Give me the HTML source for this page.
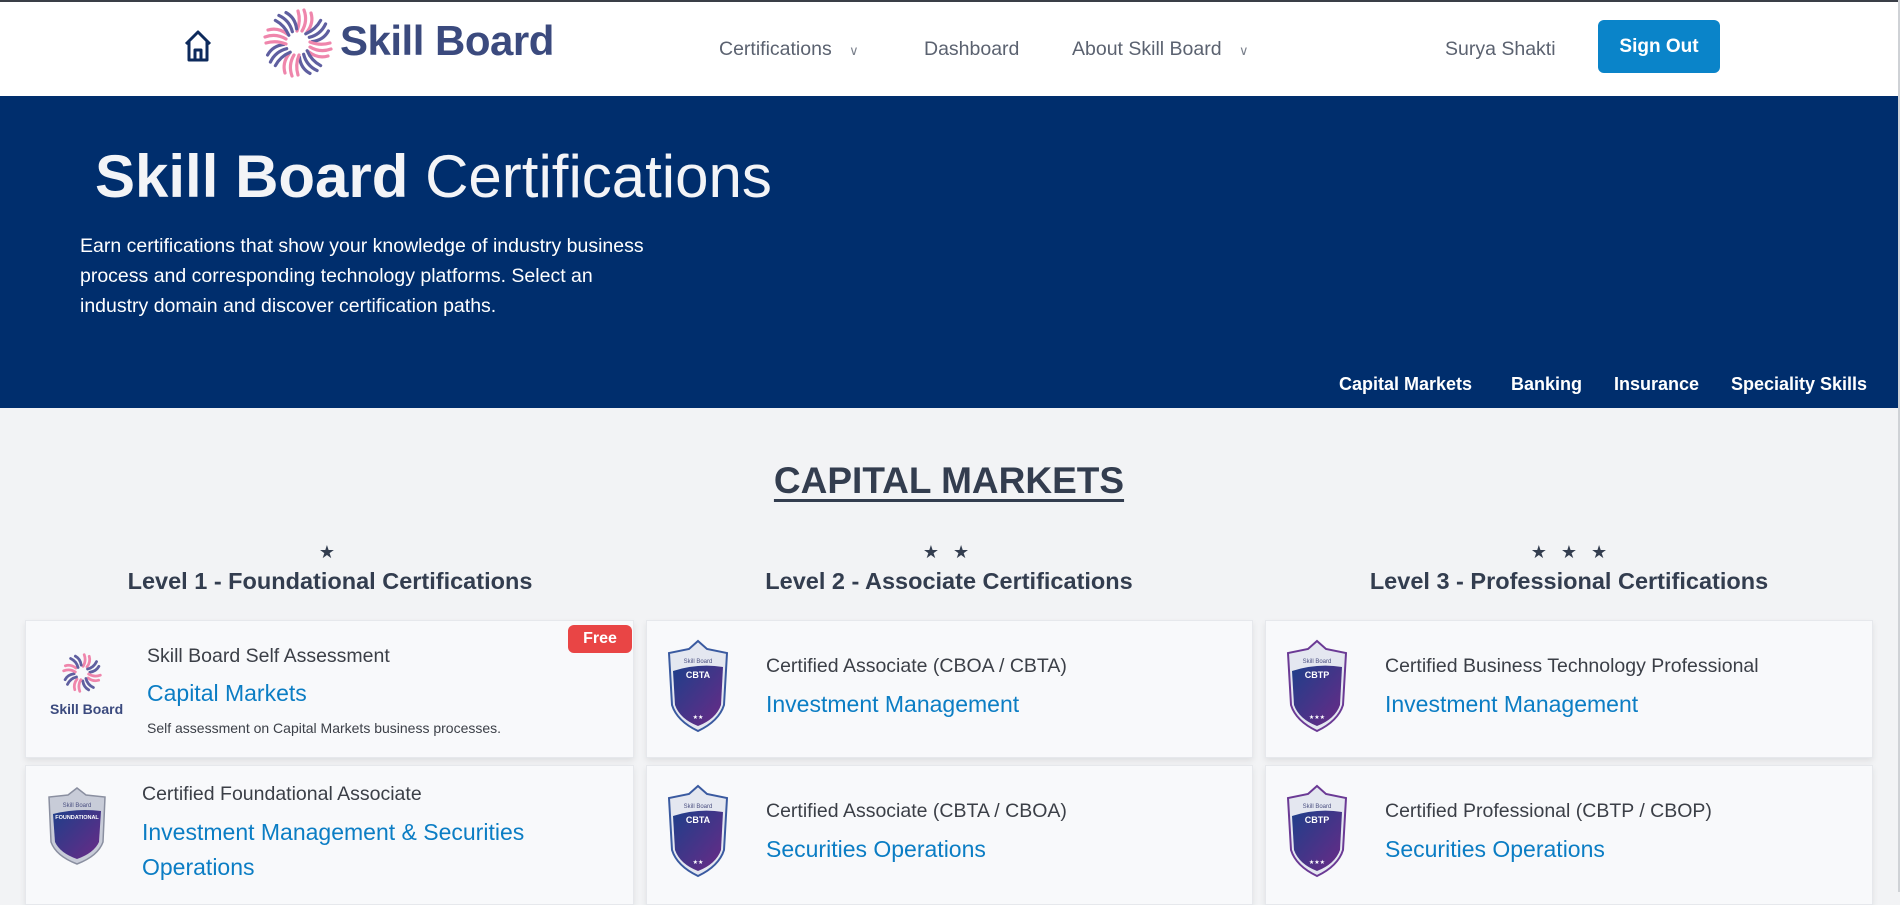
<!DOCTYPE html>
<html><head><meta charset="utf-8">
<style>
*{margin:0;padding:0;box-sizing:border-box}
body{width:1900px;height:892px;overflow:hidden;background:#f2f3f5;font-family:"Liberation Sans",Arial,sans-serif;position:relative;color:#333d4f}
.abs{position:absolute;white-space:nowrap}
#top{position:absolute;left:0;top:0;width:1900px;height:2px;background:#3a3f47}
#nav{position:absolute;left:0;top:2px;width:1898px;height:94px;background:#fff}
#sb{position:absolute;right:0;top:0;width:2px;height:892px;background:#cfd2d6}
.nl{font-size:19.5px;color:#5b6270;top:36px}
#hero{position:absolute;left:0;top:96px;width:1898px;height:312px;background:#002e6d;color:#fff}
.hl{font-size:18px;font-weight:bold;color:#fff;top:278px}
.card{position:absolute;background:#f8f9fb;border:1px solid #e6e8ec;box-shadow:0 3px 6px rgba(0,0,0,.08)}
.ct{font-size:19.5px;color:#3b3f47}
.cl{font-size:23px;color:#0b7dc4}
.lv{font-size:23.5px;font-weight:bold;color:#333d4f;text-align:center;width:600px}
.st{font-size:18px;color:#333d4f;text-align:center;width:600px;letter-spacing:14px}
</style></head><body>
<div id="top"></div>
<div id="nav">
 <svg class="abs" style="left:183px;top:28px" width="30" height="32" viewBox="0 0 30 32"><path d="M3 14 L15 2 L27 14 M6 11 V30 H24 V11 M12 30 V20 H18 V30" fill="none" stroke="#0d2a5c" stroke-width="3" stroke-linejoin="round"/></svg>
 <svg class="abs" style="left:262px;top:5px" width="72" height="72" viewBox="-36 -36 72 72">
  <g fill="none" stroke-width="3.2" stroke-linecap="round">
   <g stroke="#ef86ac"><path d="M4 -12 Q10 -22 6 -33"/><path d="M9 -11 Q16 -20 13 -30"/><path d="M-1 -12 Q3 -22 0 -32"/></g>
   <g transform="rotate(45)" stroke="#5f5fa0"><path d="M4 -12 Q10 -22 6 -33"/><path d="M9 -11 Q16 -20 13 -30"/><path d="M-1 -12 Q3 -22 0 -32"/></g>
   <g transform="rotate(90)" stroke="#ef86ac"><path d="M4 -12 Q10 -22 6 -33"/><path d="M9 -11 Q16 -20 13 -30"/><path d="M-1 -12 Q3 -22 0 -32"/></g>
   <g transform="rotate(135)" stroke="#5f5fa0"><path d="M4 -12 Q10 -22 6 -33"/><path d="M9 -11 Q16 -20 13 -30"/><path d="M-1 -12 Q3 -22 0 -32"/></g>
   <g transform="rotate(180)" stroke="#ef86ac"><path d="M4 -12 Q10 -22 6 -33"/><path d="M9 -11 Q16 -20 13 -30"/><path d="M-1 -12 Q3 -22 0 -32"/></g>
   <g transform="rotate(225)" stroke="#5f5fa0"><path d="M4 -12 Q10 -22 6 -33"/><path d="M9 -11 Q16 -20 13 -30"/><path d="M-1 -12 Q3 -22 0 -32"/></g>
   <g transform="rotate(270)" stroke="#ef86ac"><path d="M4 -12 Q10 -22 6 -33"/><path d="M9 -11 Q16 -20 13 -30"/><path d="M-1 -12 Q3 -22 0 -32"/></g>
   <g transform="rotate(315)" stroke="#5f5fa0"><path d="M4 -12 Q10 -22 6 -33"/><path d="M9 -11 Q16 -20 13 -30"/><path d="M-1 -12 Q3 -22 0 -32"/></g>
  </g></svg>
 <div class="abs" style="left:340px;top:15px;font-size:42px;font-weight:bold;color:#3b4a7e;letter-spacing:-0.5px">Skill Board</div>
 <div class="abs nl" style="left:719px">Certifications <span style="font-size:13px;margin-left:12px;color:#7a808c">&#8744;</span></div>
 <div class="abs nl" style="left:924px">Dashboard</div>
 <div class="abs nl" style="left:1072px">About Skill Board <span style="font-size:13px;margin-left:12px;color:#7a808c">&#8744;</span></div>
 <div class="abs nl" style="left:1445px">Surya Shakti</div>
 <div class="abs" style="left:1598px;top:18px;width:122px;height:53px;background:#0a84c9;border-radius:6px;color:#fff;font-size:19px;font-weight:bold;text-align:center;line-height:53px">Sign Out</div>
</div>
<div id="sb"></div>
<div id="hero">
 <div class="abs" style="left:95px;top:46px;font-size:60px;color:#f3f4f7"><b>Skill Board</b> Certifications</div>
 <div class="abs" style="left:80px;top:135px;font-size:19.5px;line-height:30px;color:#fff;white-space:normal;width:660px">Earn certifications that show your knowledge of industry business<br>process and corresponding technology platforms. Select an<br>industry domain and discover certification paths.</div>
 <div class="abs hl" style="left:1339px">Capital Markets</div>
 <div class="abs hl" style="left:1511px">Banking</div>
 <div class="abs hl" style="left:1614px">Insurance</div>
 <div class="abs hl" style="left:1731px">Speciality Skills</div>
</div>
<div class="abs" style="left:0;width:1898px;top:460px;text-align:center;font-size:37px;font-weight:bold;text-decoration:underline;text-underline-offset:6px;color:#333d4f">CAPITAL MARKETS</div>
<div class="abs st" style="left:34px;top:542px">&#9733;</div>
<div class="abs st" style="left:653px;top:542px">&#9733;&#9733;</div>
<div class="abs st" style="left:1276px;top:542px">&#9733;&#9733;&#9733;</div>
<div class="abs lv" style="left:30px;top:568px">Level 1 - Foundational Certifications</div>
<div class="abs lv" style="left:649px;top:568px">Level 2 - Associate Certifications</div>
<div class="abs lv" style="left:1269px;top:568px">Level 3 - Professional Certifications</div>

<div class="card" style="left:25px;top:620px;width:609px;height:138px">
 <svg class="abs" style="left:36px;top:32px" width="40" height="40" viewBox="-36 -36 72 72"><g fill="none" stroke-width="5" stroke-linecap="round">
  <g stroke="#ef86ac"><path d="M2 -12 Q8 -22 4 -33"/><path d="M9 -11 Q16 -20 13 -30"/></g>
  <g transform="rotate(45)" stroke="#5f5fa0"><path d="M2 -12 Q8 -22 4 -33"/><path d="M9 -11 Q16 -20 13 -30"/></g>
  <g transform="rotate(90)" stroke="#ef86ac"><path d="M2 -12 Q8 -22 4 -33"/><path d="M9 -11 Q16 -20 13 -30"/></g>
  <g transform="rotate(135)" stroke="#5f5fa0"><path d="M2 -12 Q8 -22 4 -33"/><path d="M9 -11 Q16 -20 13 -30"/></g>
  <g transform="rotate(180)" stroke="#ef86ac"><path d="M2 -12 Q8 -22 4 -33"/><path d="M9 -11 Q16 -20 13 -30"/></g>
  <g transform="rotate(225)" stroke="#5f5fa0"><path d="M2 -12 Q8 -22 4 -33"/><path d="M9 -11 Q16 -20 13 -30"/></g>
  <g transform="rotate(270)" stroke="#ef86ac"><path d="M2 -12 Q8 -22 4 -33"/><path d="M9 -11 Q16 -20 13 -30"/></g>
  <g transform="rotate(315)" stroke="#5f5fa0"><path d="M2 -12 Q8 -22 4 -33"/><path d="M9 -11 Q16 -20 13 -30"/></g></g></svg>
 <div class="abs" style="left:24px;top:80px;font-size:14px;font-weight:bold;color:#3b4a7e">Skill Board</div>
 <div class="abs ct" style="left:121px;top:24px">Skill Board Self Assessment</div>
 <div class="abs cl" style="left:121px;top:59px">Capital Markets</div>
 <div class="abs" style="left:121px;top:99px;font-size:14px;color:#3b3f47">Self assessment on Capital Markets business processes.</div>
 <div class="abs" style="left:542px;top:4px;width:64px;height:28px;background:#e94545;border-radius:6px;color:#fff;font-size:16px;font-weight:bold;text-align:center;line-height:28px">Free</div>
</div>
<div class="card" style="left:25px;top:765px;width:609px;height:140px">
 <svg class="abs" style="left:20px;top:20px" width="62" height="80" viewBox="0 0 62 80"><defs><linearGradient id="g0" x1="0" y1="0" x2="1" y2="1"><stop offset="0" stop-color="#1e3f8a"/><stop offset="1" stop-color="#6b2a86"/></linearGradient></defs><path d="M31 2 L40 9 L59 11 L57 56 Q52 70 31 78 Q10 70 5 56 L3 11 L22 9 Z" fill="#c8ccd8" stroke="#8a8fa0" stroke-width="1.5"/><path d="M7 28 Q31 22 55 25 L53 56 Q48 67 31 73 Q14 67 9 56 Z" fill="url(#g0)"/><text x="31" y="21" font-size="6" text-anchor="middle" fill="#4a4f80" font-family="Liberation Sans">Skill Board</text><text x="31" y="33" font-size="5.5" text-anchor="middle" fill="#fff" font-weight="bold" font-family="Liberation Sans">FOUNDATIONAL</text></svg>
 <div class="abs ct" style="left:116px;top:17px">Certified Foundational Associate</div>
 <div class="abs cl" style="left:116px;top:53px">Investment Management &amp; Securities</div>
 <div class="abs cl" style="left:116px;top:88px">Operations</div>
</div>

<div class="card" style="left:646px;top:620px;width:607px;height:138px">
 <svg class="abs" style="left:20px;top:18px" width="62" height="94" viewBox="0 0 62 94"><defs><linearGradient id="g1" x1="0" y1="0" x2="1" y2="1"><stop offset="0" stop-color="#1e3f8a"/><stop offset="1" stop-color="#6b2a86"/></linearGradient></defs><path d="M31 2 L40 10 L60 14 L57 66 Q52 82 31 92 Q10 82 5 66 L2 14 L22 10 Z" fill="#e4e7f0" stroke="#3a5aa0" stroke-width="2"/><path d="M6 32 Q31 24 56 28 L54 66 Q49 80 31 87 Q13 80 8 66 Z" fill="url(#g1)"/><text x="31" y="24" font-size="6" text-anchor="middle" fill="#4a4f80" font-family="Liberation Sans">Skill Board</text><text x="31" y="39" font-size="9" text-anchor="middle" fill="#fff" font-weight="bold" font-family="Liberation Sans">CBTA</text><text x="31" y="80" font-size="6" text-anchor="middle" fill="#fff">★★</text></svg>
 <div class="abs ct" style="left:119px;top:34px">Certified Associate (CBOA / CBTA)</div>
 <div class="abs cl" style="left:119px;top:70px">Investment Management</div>
</div>
<div class="card" style="left:646px;top:765px;width:607px;height:140px">
 <svg class="abs" style="left:20px;top:18px" width="62" height="94" viewBox="0 0 62 94"><path d="M31 2 L40 10 L60 14 L57 66 Q52 82 31 92 Q10 82 5 66 L2 14 L22 10 Z" fill="#e4e7f0" stroke="#3a5aa0" stroke-width="2"/><path d="M6 32 Q31 24 56 28 L54 66 Q49 80 31 87 Q13 80 8 66 Z" fill="url(#g1)"/><text x="31" y="24" font-size="6" text-anchor="middle" fill="#4a4f80" font-family="Liberation Sans">Skill Board</text><text x="31" y="39" font-size="9" text-anchor="middle" fill="#fff" font-weight="bold" font-family="Liberation Sans">CBTA</text><text x="31" y="80" font-size="6" text-anchor="middle" fill="#fff">★★</text></svg>
 <div class="abs ct" style="left:119px;top:34px">Certified Associate (CBTA / CBOA)</div>
 <div class="abs cl" style="left:119px;top:70px">Securities Operations</div>
</div>

<div class="card" style="left:1265px;top:620px;width:608px;height:138px">
 <svg class="abs" style="left:20px;top:18px" width="62" height="94" viewBox="0 0 62 94"><defs><linearGradient id="g2" x1="0" y1="0" x2="1" y2="1"><stop offset="0" stop-color="#1e3f8a"/><stop offset="1" stop-color="#6b2a86"/></linearGradient></defs><path d="M31 2 L40 10 L60 14 L57 66 Q52 82 31 92 Q10 82 5 66 L2 14 L22 10 Z" fill="#e4e7f0" stroke="#6b3a95" stroke-width="2"/><path d="M6 32 Q31 24 56 28 L54 66 Q49 80 31 87 Q13 80 8 66 Z" fill="url(#g2)"/><text x="31" y="24" font-size="6" text-anchor="middle" fill="#4a4f80" font-family="Liberation Sans">Skill Board</text><text x="31" y="39" font-size="9" text-anchor="middle" fill="#fff" font-weight="bold" font-family="Liberation Sans">CBTP</text><text x="31" y="80" font-size="6" text-anchor="middle" fill="#fff">★★★</text></svg>
 <div class="abs ct" style="left:119px;top:34px">Certified Business Technology Professional</div>
 <div class="abs cl" style="left:119px;top:70px">Investment Management</div>
</div>
<div class="card" style="left:1265px;top:765px;width:608px;height:140px">
 <svg class="abs" style="left:20px;top:18px" width="62" height="94" viewBox="0 0 62 94"><path d="M31 2 L40 10 L60 14 L57 66 Q52 82 31 92 Q10 82 5 66 L2 14 L22 10 Z" fill="#e4e7f0" stroke="#6b3a95" stroke-width="2"/><path d="M6 32 Q31 24 56 28 L54 66 Q49 80 31 87 Q13 80 8 66 Z" fill="url(#g2)"/><text x="31" y="24" font-size="6" text-anchor="middle" fill="#4a4f80" font-family="Liberation Sans">Skill Board</text><text x="31" y="39" font-size="9" text-anchor="middle" fill="#fff" font-weight="bold" font-family="Liberation Sans">CBTP</text><text x="31" y="80" font-size="6" text-anchor="middle" fill="#fff">★★★</text></svg>
 <div class="abs ct" style="left:119px;top:34px">Certified Professional (CBTP / CBOP)</div>
 <div class="abs cl" style="left:119px;top:70px">Securities Operations</div>
</div>
</body></html>
